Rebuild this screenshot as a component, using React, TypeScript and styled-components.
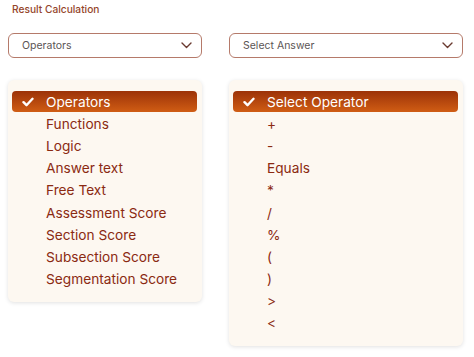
import styled, { createGlobalStyle } from "styled-components";

const GlobalStyle = createGlobalStyle`
  html, body {
    margin: 0;
    padding: 0;
    background: #ffffff;
    font-family: Inter, "Liberation Sans", sans-serif;
  }
`;

const Page = styled.div`
  width: 474px;
  height: 357px;
  box-sizing: border-box;
  padding: 2px 11px 0 8px;
  overflow: hidden;
`;

const Title = styled.div`
  font-size: 10.2px;
  font-weight: 500;
  color: #94452a;
  padding-left: 4px;
  height: 14px;
  line-height: 14px;
`;

const Columns = styled.div`
  display: grid;
  grid-template-columns: 194px 234px;
  column-gap: 27px;
  margin-top: 17px;
  align-items: start;
`;

const Column = styled.div`
  display: flex;
  flex-direction: column;
  gap: 22px;
`;

const Select = styled.div`
  height: 25px;
  box-sizing: border-box;
  border: 1px solid #b57a6a;
  border-radius: 6px;
  display: flex;
  align-items: center;
  justify-content: space-between;
  padding: 0 9px 0 13px;
  font-size: 10.5px;
  color: #5b5555;
`;

const Panel = styled.div`
  background: #fdf8f1;
  border-radius: 6px;
  box-shadow: 0 1px 4px rgba(0, 0, 0, 0.12);
  padding: 11px 5px 12px 4px;
  display: flex;
  flex-direction: column;
`;

const Row = styled.div<{ $active?: boolean }>`
  display: flex;
  align-items: center;
  position: relative;
  padding-left: 34px;
  font-size: 13.7px;
  font-weight: 400;
  color: ${(p) => (p.$active ? "#ffffff" : "#8b2a12")};
  border-radius: 4px;
  background: ${(p) =>
    p.$active ? "linear-gradient(180deg, #9c3208 0%, #d05d14 100%)" : "transparent"};
  height: ${(p) => (p.$active ? "21px" : "22.1px")};
  margin-bottom: ${(p) => (p.$active ? "1.1px" : "0")};
`;

const Check = styled.svg`
  position: absolute;
  left: 10px;
  top: 50%;
  transform: translateY(-50%);
`;

const Chevron = () => (
  <svg width="11" height="7" viewBox="0 0 11 7" fill="none">
    <path d="M1 1l4.5 4.5L10 1" stroke="#6a3a30" strokeWidth="1.4" strokeLinecap="round" strokeLinejoin="round" />
  </svg>
);

const Menu = ({ items }: { items: string[] }) => (
  <Panel>
    {items.map((it, i) => (
      <Row key={it} $active={i === 0}>
        {i === 0 && (
          <Check width="12" height="10" viewBox="0 0 12 10">
            <path d="M1.5 5.2l3 3L10.5 1.8" stroke="#fff" strokeWidth="2.4" fill="none" strokeLinecap="round" strokeLinejoin="round" />
          </Check>
        )}
        {it}
      </Row>
    ))}
  </Panel>
);

const left = [
  "Operators",
  "Functions",
  "Logic",
  "Answer text",
  "Free Text",
  "Assessment Score",
  "Section Score",
  "Subsection Score",
  "Segmentation Score",
];

const right = ["Select Operator", "+", "-", "Equals", "*", "/", "%", "(", ")", ">", "<"];

export default function App() {
  return (
    <Page>
      <GlobalStyle />
      <Title>Result Calculation</Title>
      <Columns>
        <Column>
          <Select>
            Operators
            <Chevron />
          </Select>
          <Menu items={left} />
        </Column>
        <Column>
          <Select>
            Select Answer
            <Chevron />
          </Select>
          <Menu items={right} />
        </Column>
      </Columns>
    </Page>
  );
}
